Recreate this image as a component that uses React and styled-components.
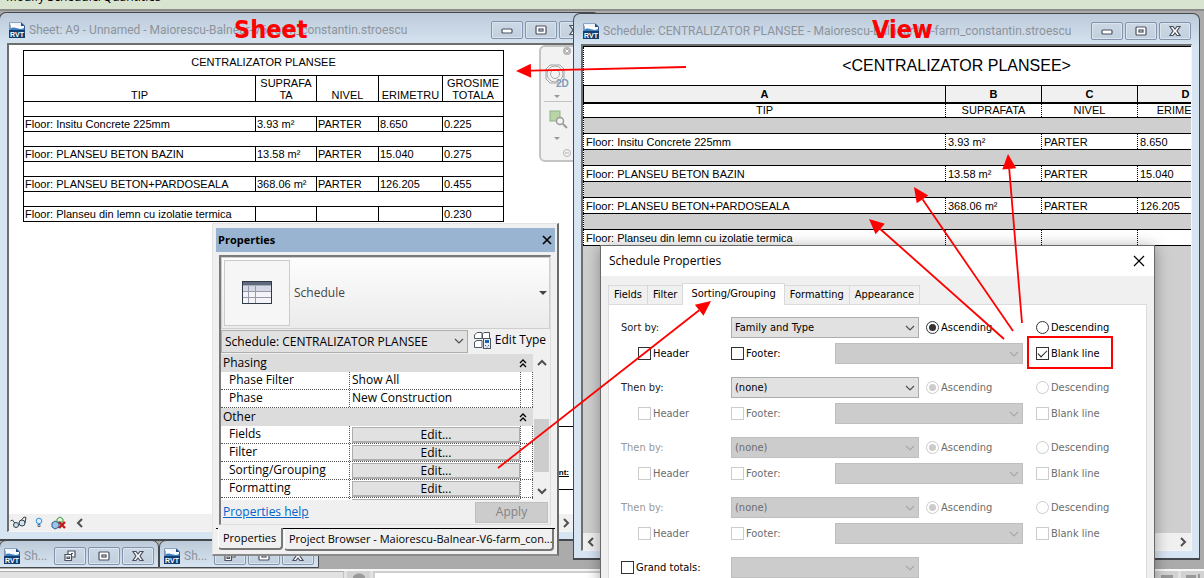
import React, { useState } from 'react';
import styled, { createGlobalStyle, css } from 'styled-components';

const ui = '"Open Sans", "Noto Sans", sans-serif';
const captionFont = 'Roboto, "Open Sans", sans-serif';
const dialogFont = '"DejaVu Sans Condensed", "DejaVu Sans", sans-serif';
const arial = '"Liberation Sans", Arial, sans-serif';

const sheetRows = [
  ['Floor: Insitu Concrete 225mm', '3.93 m²', 'PARTER', '8.650', '0.225'],
  ['Floor: PLANSEU BETON BAZIN', '13.58 m²', 'PARTER', '15.040', '0.275'],
  ['Floor: PLANSEU BETON+PARDOSEALA', '368.06 m²', 'PARTER', '126.205', '0.455'],
  ['Floor: Planseu din lemn cu izolatie termica', '', '', '', '0.230'],
];

const properties = [
  { category: 'Phasing' },
  { name: 'Phase Filter', value: 'Show All' },
  { name: 'Phase', value: 'New Construction' },
  { category: 'Other' },
  { name: 'Fields' },
  { name: 'Filter' },
  { name: 'Sorting/Grouping' },
  { name: 'Formatting' },
];

const tabs = ['Fields', 'Filter', 'Sorting/Grouping', 'Formatting', 'Appearance'];

const arrows = [
  [686, 67, 516, 71],
  [498, 468, 711, 301],
  [1004, 339, 869, 219],
  [1013, 331, 914, 187],
  [1022, 323, 1008, 154],
];

const RvtIcon = () => (
  <svg width="16" height="16" viewBox="0 0 16 16" aria-hidden="true">
    <path d="M1 0.5h11l3.5 3.5v11.5H1z" fill="#fff" stroke="#2a5a94" />
    <path d="M1 3c4-3 7 3 11 1V0.5H1z" fill="#eef4fa" />
    <path d="M1 7c5-4 8 2 14-1v4H1z" fill="#3f7fc0" />
    <path d="M12 0.5v3.5h3.5z" fill="#1d4a80" />
    <rect x="0" y="8" width="16" height="8" fill="#123d70" />
    <text x="8" y="15" textAnchor="middle" fontFamily="Liberation Sans" fontWeight="700" fontSize="7" fill="#fff">RVT</text>
  </svg>
);

const Glyph = ({ kind }) => (
  <svg width="14" height="12" viewBox="0 0 14 12" fill="#fff" stroke="#4a5060" strokeWidth="1.2" aria-hidden="true">
    {kind === 'min' && <rect x="2" y="5" width="10" height="4" rx="1" />}
    {kind === 'max' && <><rect x="2" y="2" width="10" height="8" rx="1" /><rect x="5" y="5" width="4" height="2" /></>}
    {kind === 'restore' && <><path d="M5 1h7v6H5z" /><path d="M2 4.500h6.500v6H2z" /><path d="M4 7h2.500v1.500H4zM8 3.500h2" /></>}
    {kind === 'close' && <path d="M2 1.500h3l2 2.500 2-2.500h3L9 6l3 4.500H9L7 8l-2 2.500H2L5 6z" />}
  </svg>
);

const Chevron = ({ dir = 'down', size = 10, color = '#505050', width = 1.2 }) => {
  const d = { down: 'M1 3l4 4 4-4', up: 'M1 7l4-4 4 4', left: 'M7 1L3 5l4 4', right: 'M3 1l4 4-4 4' }[dir];
  return (
    <svg width={size} height={size} viewBox="0 0 10 10" fill="none" stroke={color} strokeWidth={width} aria-hidden="true">
      <path d={d} />
    </svg>
  );
};

const WindowButtons = ({ first = 'min' }) => (
  <Buttons>
    <CaptionButton aria-label={first === 'min' ? 'Minimize' : 'Restore'}><Glyph kind={first} /></CaptionButton>
    <CaptionButton aria-label="Maximize"><Glyph kind="max" /></CaptionButton>
    <CaptionButton aria-label="Close"><Glyph kind="close" /></CaptionButton>
  </Buttons>
);

const Dropdown = ({ label, value, disabled, palette }) => (
  <SelectBox>
    <Select aria-label={label} disabled={disabled} $palette={palette}>
      <option>{value}</option>
    </Select>
    <Chevron color={disabled ? '#a8a8a8' : '#505050'} />
  </SelectBox>
);

const NavigationBar = () => (
  <NavBar>
    <svg width="36" height="113" viewBox="0 3 36 113" fill="none" stroke="#a8a8a8" aria-hidden="true">
      <circle cx="26" cy="7" r="4" fill="#b4b4b4" stroke="none" />
      <path d="M24.500 5.500l3 3m0-3l-3 3" stroke="#fff" />
      <path d="M9 21h10l4 4v10l-4 4H9l-4-4V25z" stroke="#8f8f8f" strokeWidth="0.800" />
      <circle cx="14" cy="30" r="8" />
      <circle cx="14" cy="30" r="4.500" />
      <text x="15" y="43" fontFamily="Liberation Sans" fontWeight="700" fontSize="10" fill="#7d9dbf" stroke="none">2D</text>
      <path d="M13 51h6l-3 3z" fill="#999" stroke="none" />
      <path d="M3 57.500h28" stroke="#c4c4c4" />
      <rect x="9" y="67" width="10" height="10" fill="#b8d4a8" stroke="#8fb183" />
      <circle cx="19" cy="77" r="3.500" fill="#f4f4f4" stroke="#999" strokeWidth="1.500" />
      <path d="M22 80l4 4" stroke="#999" strokeWidth="2" />
      <path d="M13 93h6l-3 3z" fill="#999" stroke="none" />
      <circle cx="26" cy="109" r="3.500" stroke="#b4b4b4" />
      <path d="M24 109h4" stroke="#b4b4b4" />
    </svg>
  </NavBar>
);

const SheetWindow = () => (
  <Window $left="-1px" $right="604px" $top="1px" $bottom="28px">
    <TitleBar>
      <RvtIcon />
      <Caption>Sheet: A9 - Unnamed - Maiorescu-Balnear-V6-farm_constantin.stroescu</Caption>
      <WindowButtons />
    </TitleBar>
    <Client>
      <SheetCanvas>
        <SheetTable>
          <colgroup>
            <col width="232" />
            <col width="61" />
            <col width="62" />
            <col width="64" />
            <col width="61" />
          </colgroup>
          <tbody>
            <SheetTitle><td colSpan="5">CENTRALIZATOR PLANSEE</td></SheetTitle>
            <SheetHead>
              <th>TIP</th>
              <th>SUPRAFA<br />TA</th>
              <th>NIVEL</th>
              <th>ERIMETRU</th>
              <th>GROSIME<br />TOTALA</th>
            </SheetHead>
            {sheetRows.map((row) => (
              <React.Fragment key={row[0]}>
                <tr><td colSpan="5" /></tr>
                <tr>{row.map((cell, i) => <td key={i}>{cell}</td>)}</tr>
              </React.Fragment>
            ))}
          </tbody>
        </SheetTable>
        <TitleBlock><span>Client:</span></TitleBlock>
        <NavigationBar />
      </SheetCanvas>
      <ViewControls>
        <svg width="17" height="14" viewBox="0 0 17 14" fill="none" stroke="#333f4c" aria-hidden="true">
          <path d="M0.500 5l2-1 3 4M9 7l5-6 2 0.500M15 7l1-5.500" />
          <circle cx="6" cy="9" r="2.500" fill="#cfe2ee" />
          <circle cx="12" cy="7" r="3" fill="#cfe2ee" />
        </svg>
        <svg width="8" height="14" viewBox="0 0 8 14" fill="none" aria-hidden="true">
          <circle cx="4" cy="5" r="2.800" fill="#d9efff" stroke="#2d8fe0" />
          <path d="M3 8.500h2v2H3z" fill="#fff" stroke="#506a80" />
        </svg>
        <svg width="16" height="14" viewBox="0 0 16 14" aria-hidden="true">
          <path d="M1 7l3-2 4 2v4l-4 2-3-2z" fill="#9cc4e4" stroke="#2b5f93" />
          <path d="M6 3l3-2 3 2v3H6z" fill="#e4f3dc" stroke="#3b9440" />
          <path d="M8 6l6 6m0-6l-6 6" stroke="#c2181c" strokeWidth="2.400" />
        </svg>
        <Chevron dir="left" width={2} />
        <Spacer />
        <Chevron dir="right" width={2} />
      </ViewControls>
    </Client>
  </Window>
);

const ScheduleWindow = () => (
  <Window $left="573px" $right="4px" $top="2px" $bottom="9px">
    <TitleBar>
      <RvtIcon />
      <Caption>Schedule: CENTRALIZATOR PLANSEE - Maiorescu-Balnear-V6-farm_constantin.stroescu</Caption>
      <WindowButtons />
    </TitleBar>
    <Client $grey>
      <ScheduleCanvas>
        <ScheduleTable>
          <colgroup>
            <col width="362" />
            <col width="96" />
            <col width="96" />
            <col width="96" />
            <col width="96" />
          </colgroup>
          <tbody>
            <ScheduleTitle><td colSpan="5">&lt;CENTRALIZATOR PLANSEE&gt;</td></ScheduleTitle>
            <LetterRow><th>A</th><th>B</th><th>C</th><th>D</th><th /></LetterRow>
            <FieldRow><td>TIP</td><td>SUPRAFATA</td><td>NIVEL</td><td>ERIMETRU</td><td /></FieldRow>
            {sheetRows.map((row) => (
              <React.Fragment key={row[0]}>
                <BlankRow><td colSpan="5" /></BlankRow>
                <tr>{row.map((cell, i) => <td key={i}>{i < 4 ? cell : ''}</td>)}</tr>
              </React.Fragment>
            ))}
          </tbody>
        </ScheduleTable>
      </ScheduleCanvas>
      <ScrollTrack>
        <Chevron dir="left" width={2} />
        <Chevron dir="right" width={2} />
      </ScrollTrack>
    </Client>
  </Window>
);

const PropertiesPalette = () => (
  <Palette>
    <PaletteTitle>
      Properties
      <IconButton aria-label="Close palette">
        <svg width="10" height="10" viewBox="0 0 10 10" stroke="#000" strokeWidth="1.600"><path d="M1 1l8 8m0-8L1 9" /></svg>
      </IconButton>
    </PaletteTitle>
    <PaletteBody>
      <TypeSelector>
        <Thumb>
          <svg width="30" height="24" viewBox="0 0 30 24" aria-hidden="true">
            <rect x="0.500" y="0.500" width="29" height="22" fill="#f4f4f8" stroke="#2f3947" />
            <rect x="1" y="1" width="28" height="3.500" fill="#5f6b7c" />
            <rect x="1" y="5" width="28" height="5" fill="#d5d9e6" />
            <path d="M1 10.500h28M1 16.500h28M6.500 5v17M13.500 5v17" stroke="#99a" />
            <rect x="0.500" y="0.500" width="29" height="22" fill="none" stroke="#2f3947" />
          </svg>
        </Thumb>
        <TypeName>Schedule</TypeName>
        <svg width="8" height="4" viewBox="0 0 8 4" aria-hidden="true"><path d="M0 0h8L4 4z" fill="#444" /></svg>
      </TypeSelector>
      <InstanceRow>
        <Dropdown palette label="Instance" value="Schedule: CENTRALIZATOR PLANSEE" />
        <EditType>
          <svg width="17" height="17" viewBox="0 0 17 17" fill="#fff" stroke="#4c5766" aria-hidden="true">
            <path d="M3 0.500h5v6H0.500V3zM10 0.500h5.500v6H8.500V2zM3 8.500h5v7H0.500V10z" />
            <rect x="9.500" y="6.500" width="7" height="10" fill="#e7edf4" />
            <rect x="11" y="8" width="4" height="3" fill="#1d63ad" stroke="none" />
            <path d="M11 13.500h1M14 13.500h1M12.500 15h1" />
          </svg>
          Edit Type
        </EditType>
      </InstanceRow>
      <GridArea>
        <PropertyList>
          {properties.map((p) => p.category ? (
            <Category key={p.category}>
              {p.category}
              <svg width="8" height="9" viewBox="0 0 8 9" fill="none" stroke="#000" strokeWidth="1.300" aria-hidden="true">
                <path d="M1 4l3-3 3 3M1 8l3-3 3 3" />
              </svg>
            </Category>
          ) : (
            <Property key={p.name}>
              <PropertyName>{p.name}</PropertyName>
              <PropertyValue>{p.value || <EditButton aria-label={`Edit ${p.name}`}>Edit...</EditButton>}</PropertyValue>
              <PropertyLink />
            </Property>
          ))}
          <Property>
            <PropertyName />
            <PropertyValue><EditButton aria-label="Edit" /></PropertyValue>
            <PropertyLink />
          </Property>
        </PropertyList>
        <VerticalScroll>
          <Chevron dir="up" width={2} />
          <ScrollThumb />
          <Chevron dir="down" width={2} />
        </VerticalScroll>
      </GridArea>
      <PaletteFooter>
        <a href="#help">Properties help</a>
        <ApplyButton disabled>Apply</ApplyButton>
      </PaletteFooter>
    </PaletteBody>
    <PaletteTabs>
      <PaletteTab $active>Properties</PaletteTab>
      <PaletteTab>Project Browser - Maiorescu-Balnear-V6-farm_con...</PaletteTab>
    </PaletteTabs>
  </Palette>
);

const SortGroup = ({ id, title, value, dim, disabled, dimTitle }) => {
  const [order, setOrder] = useState('asc');
  const [blank, setBlank] = useState(!dim);

  return (
    <Group>
      <RowLabel $dim={dimTitle}>{title}</RowLabel>
      <Wide><Dropdown label={title} value={value} disabled={disabled} /></Wide>
      <Choice $dim={dim} $indent="7px">
        <Radio name={id} disabled={dim} checked={order === 'asc'} onChange={() => setOrder('asc')} />Ascending
      </Choice>
      <Choice $dim={dim}>
        <Radio name={id} disabled={dim} checked={order === 'desc'} onChange={() => setOrder('desc')} />Descending
      </Choice>
      <Choice $dim={dim} $indent="17px"><Check disabled={dim} />Header</Choice>
      <Choice $dim={dim}><Check disabled={dim} />Footer:</Choice>
      <Wide><Dropdown label={`${title} footer`} value="" disabled /></Wide>
      <Choice $dim={dim}>
        <Check disabled={dim} checked={blank} onChange={() => setBlank(!blank)} />Blank line
      </Choice>
    </Group>
  );
};

const ScheduleDialog = () => {
  const [active, setActive] = useState('Sorting/Grouping');

  return (
    <Dialog role="dialog" aria-label="Schedule Properties">
      <DialogTitle>
        Schedule Properties
        <IconButton aria-label="Close dialog">
          <svg width="12" height="12" viewBox="0 0 12 12" stroke="#000" strokeWidth="1.200"><path d="M1 1l10 10m0-10L1 11" /></svg>
        </IconButton>
      </DialogTitle>
      <DialogTabs>
        {tabs.map((tab) => (
          <DialogTab key={tab} $active={tab === active} onClick={() => setActive(tab)}>{tab}</DialogTab>
        ))}
      </DialogTabs>
      <DialogPanel>
        <SortGroup id="sort1" title="Sort by:" value="Family and Type" />
        <SortGroup id="sort2" title="Then by:" value="(none)" dim />
        <SortGroup id="sort3" title="Then by:" value="(none)" dim disabled dimTitle />
        <SortGroup id="sort4" title="Then by:" value="(none)" dim disabled dimTitle />
        <Group>
          <Choice><Check />Grand totals:</Choice>
          <Wide><Dropdown label="Grand totals" value="" disabled /></Wide>
        </Group>
      </DialogPanel>
    </Dialog>
  );
};

const Arrow = ({ points: [x1, y1, x2, y2] }) => {
  const len = Math.hypot(x2 - x1, y2 - y1);
  const ux = (x2 - x1) / len;
  const uy = (y2 - y1) / len;
  const bx = x2 - ux * 15;
  const by = y2 - uy * 15;
  return (
    <g>
      <line x1={x1} y1={y1} x2={bx} y2={by} stroke="#ff0000" strokeWidth="1.800" />
      <polygon fill="#ff0000" points={`${x2},${y2} ${bx - uy * 7},${by + ux * 7} ${bx + uy * 7},${by - ux * 7}`} />
    </g>
  );
};

const App = () => (
  <Desktop>
    <GlobalStyle />
    <OptionsBar>Modify Schedule/Quantities</OptionsBar>
    <Workspace>
      <SheetWindow />
      <ScheduleWindow />
      <Minimized>
        {[0, 1].map((i) => (
          <MinimizedWindow key={i}>
            <RvtIcon />
            <Caption>Sh...</Caption>
            <WindowButtons first="restore" />
          </MinimizedWindow>
        ))}
      </Minimized>
    </Workspace>
    <StatusBar>
      <StatusText />
      <StatusIcon><svg width="12" height="5" viewBox="0 0 12 5"><path d="M0 5c0-6 12-6 12 0z" fill="#999" /></svg></StatusIcon>
      <StatusField />
      <StatusIcon />
      <Spacer />
      <StatusIcon><svg width="12" height="4" viewBox="0 0 12 4"><path d="M0 1h12v3H0z" fill="#999" /></svg></StatusIcon>
      <StatusIcon><svg width="14" height="4" viewBox="0 0 14 4"><path d="M0 1h10v3H0zM12 0h2v4h-2z" fill="#999" /></svg></StatusIcon>
    </StatusBar>
    <PropertiesPalette />
    <ScheduleDialog />
    <Markup aria-hidden="true">
      {arrows.map((points) => <Arrow key={points.join()} points={points} />)}
      <rect x="1028" y="337" width="84" height="31" fill="none" stroke="#ff0000" strokeWidth="2" />
    </Markup>
    <Note $left="234px">Sheet</Note>
    <Note $left="872px">View</Note>
  </Desktop>
);

const GlobalStyle = createGlobalStyle`
  * { box-sizing: border-box; }
  body { margin: 0; overflow: hidden; }
  button, select, input { font: inherit; color: inherit; margin: 0; padding: 0; }
  svg { display: block; flex: none; }
`;

const Desktop = styled.div`
  position: relative;
  display: flex;
  flex-direction: column;
  height: 100vh;
  overflow: hidden;
  background: #ababab;
  font: 12px/16px ${ui};
  color: #000;
`;

const OptionsBar = styled.div`
  display: flex;
  align-items: flex-end;
  height: 11px;
  padding: 0 6px 4px;
  overflow: hidden;
  background: #d8e4d0;
  border-bottom: 2px solid #8c8c8c;
`;

const Workspace = styled.main`
  position: relative;
  flex: 1;
  overflow: hidden;
`;

const Window = styled.section`
  position: absolute;
  left: ${(p) => p.$left};
  right: ${(p) => p.$right};
  top: ${(p) => p.$top};
  bottom: ${(p) => p.$bottom};
  display: flex;
  flex-direction: column;
  padding: 0 7px 7px;
  border: 1px solid #45484c;
  border-bottom-width: 2px;
  border-radius: 7px 7px 0 0;
  background: linear-gradient(#bccad9, #d7e4f2 32px);
`;

const TitleBar = styled.header`
  display: flex;
  align-items: center;
  gap: 4px;
  height: 30px;
  padding: 4px 1px 0 2px;
`;

const Caption = styled.div`
  flex: 1;
  min-width: 0;
  overflow: hidden;
  white-space: nowrap;
  font-family: ${captionFont};
  color: #8d939b;
`;

const Buttons = styled.div`
  display: flex;
  gap: 2px;
`;

const CaptionButton = styled.button`
  display: grid;
  place-items: center;
  width: 32px;
  height: 18px;
  border: 1px solid #8493ad;
  border-radius: 2px;
  background: linear-gradient(#ccd8e4, #c2cfdd);
  box-shadow: inset 0 0 0 1px #dbe5ef;
`;

const Client = styled.div`
  flex: 1;
  display: flex;
  flex-direction: column;
  min-height: 0;
  border: 2px solid #6e6e6e;
  border-width: 2px 1px 1px 2px;
  border-right-color: #f4f4f4;
  border-bottom-color: #f4f4f4;
  background: ${(p) => (p.$grey ? '#cfcfcf' : '#fff')};
`;

const SheetCanvas = styled.div`
  position: relative;
  flex: 1;
  min-height: 0;
  padding: 5px 0 0 14px;
  overflow: hidden;
`;

const tableText = css`
  border-collapse: collapse;
  table-layout: fixed;
  font: 11px/12px ${arial};
`;

const SheetTable = styled.table`
  ${tableText}
  width: 481px;

  td, th {
    height: 15px;
    padding: 0 1px;
    border: 1px solid #000;
    font-weight: 400;
    white-space: nowrap;
  }
`;

const SheetTitle = styled.tr`
  && td {
    height: 25px;
    padding-bottom: 2px;
    text-align: center;
  }
`;

const SheetHead = styled.tr`
  && th {
    height: 26px;
    vertical-align: bottom;
    text-align: center;
  }
`;

const TitleBlock = styled.div`
  position: absolute;
  top: 381px;
  left: 400px;
  right: 0;
  height: 64px;
  padding: 40px 22px 0 0;
  border: 1px solid #000;
  border-width: 1px 0;
  text-align: right;
  font: 700 8px/12px ${arial};
  text-decoration: underline;
`;

const NavBar = styled.div`
  position: absolute;
  top: 0;
  left: 530px;
  width: 40px;
  border: 2px solid #c4c4c4;
  border-radius: 6px;
  background: #f2f2f2;
  overflow: hidden;
`;

const ViewControls = styled.div`
  display: flex;
  align-items: center;
  gap: 8px;
  height: 17px;
  padding: 0 20px 0 1px;
  background: #f0f0f0;
`;

const Spacer = styled.div`
  flex: 1;
`;

const ScheduleCanvas = styled.div`
  flex: 1;
  min-height: 0;
  overflow: hidden;
`;

const ScheduleTable = styled.table`
  ${tableText}
  width: 746px;
  background: #fff;

  td, th {
    height: 16px;
    padding: 0 2px;
    border: 1px solid #000;
    border-left: 1px dotted #000;
    border-right: 1px dotted #000;
    white-space: nowrap;
    overflow: hidden;
  }
`;

const ScheduleTitle = styled.tr`
  && td {
    height: 39px;
    font-size: 16px;
    text-align: center;
  }
`;

const LetterRow = styled.tr`
  background: #f0f0f0;

  && th {
    height: 17px;
    border: 1px solid #000;
    border-bottom-width: 2px;
  }
`;

const FieldRow = styled.tr`
  text-align: center;

  && td { height: 15px; }
`;

const BlankRow = styled.tr`
  background: #cfcfcf;
`;

const ScrollTrack = styled.div`
  display: flex;
  align-items: center;
  justify-content: space-between;
  height: 17px;
  padding: 0 3px;
  background: #f0f0f0;
`;

const Minimized = styled.div`
  position: absolute;
  left: -1px;
  bottom: 1px;
  display: flex;
`;

const MinimizedWindow = styled.section`
  display: flex;
  align-items: center;
  gap: 4px;
  width: 160px;
  height: 28px;
  padding: 3px 4px 0;
  border: 1px solid #45484c;
  border-radius: 7px 7px 0 0;
  background: linear-gradient(#bccad9, #d7e4f2);
`;

const StatusBar = styled.footer`
  display: flex;
  gap: 3px;
  height: 9px;
  border-top: 2px solid #f8f8f8;
  background: #e2e2e2;
`;

const StatusText = styled.div`
  width: 344px;
  border-top: 1px solid #b0b0b0;
  border-right: 1px solid #c0c0c0;
`;

const StatusIcon = styled.div`
  display: flex;
  justify-content: center;
  align-items: flex-end;
  width: 23px;
  background: #d2d2d2;
`;

const StatusField = styled.div`
  width: 346px;
  background: #fff;
  border: 2px solid #cfcfcf;
  border-bottom: 0;
`;

const Palette = styled.section`
  position: absolute;
  left: 212px;
  top: 223px;
  width: 347px;
  padding: 4px 2px 3px 3px;
  border: 1px solid #e3e3e3;
  border-right: 2px solid #6b6b6b;
  border-bottom: 2px solid #8a8a8a;
  background: #f0f0f0;
`;

const PaletteTitle = styled.header`
  display: flex;
  align-items: center;
  justify-content: space-between;
  height: 24px;
  padding: 0 2px;
  background: #99b4d1;
  font-size: 11px;
  font-weight: 700;
`;

const IconButton = styled.button`
  display: grid;
  place-items: center;
  width: 12px;
  height: 16px;
  border: 0;
  background: none;
`;

const PaletteBody = styled.div`
  margin: 3px 4px 0 3px;
  border: 2px solid #7a7a7a;
  border-width: 2px 1px 1px 2px;
  border-right-color: #ddd;
  border-bottom-color: #ddd;
`;

const TypeSelector = styled.div`
  display: flex;
  align-items: center;
  height: 72px;
  padding: 0 2px;
  border: 1px solid #cfcfcf;
  background: linear-gradient(#fdfdfd, #ebebeb);
`;

const Thumb = styled.div`
  display: grid;
  place-items: center;
  width: 66px;
  height: 66px;
  border: 1px solid #cbcbcb;
  background: #f6f6f6;
`;

const TypeName = styled.div`
  flex: 1;
  padding-left: 4px;
  color: #444;
`;

const InstanceRow = styled.div`
  display: grid;
  grid-template-columns: 1fr auto;
  gap: 6px;
  height: 25px;
  padding: 1px 4px 0 0;
`;

const SelectBox = styled.div`
  position: relative;
  min-width: 0;

  svg {
    position: absolute;
    right: 4px;
    top: 6px;
    pointer-events: none;
  }
`;

const Select = styled.select`
  appearance: none;
  display: block;
  width: 100%;
  height: ${(p) => (p.$palette ? '23px' : '21px')};
  padding: 0 16px 0 3px;
  border: 1px solid #adadad;
  border-radius: 0;
  background: #e1e1e1;

  &:disabled {
    border-color: #bfbfbf;
    background: #cccccc;
    color: #6d6d6d;
    opacity: 1;
  }
`;

const EditType = styled.button`
  display: flex;
  align-items: center;
  gap: 4px;
  height: 20px;
  border: 0;
  background: none;
  white-space: nowrap;
`;

const GridArea = styled.div`
  display: flex;
  height: 146px;
  overflow: hidden;
`;

const PropertyList = styled.div`
  flex: 1;
  background: #fff;
`;

const Category = styled.div`
  display: flex;
  align-items: center;
  justify-content: space-between;
  height: 18px;
  padding: 0 6px 0 2px;
  background: #dcdcdc;
`;

const Property = styled.div`
  display: grid;
  grid-template-columns: 129px 1fr 13px;
  height: 18px;
  border-bottom: 1px dotted #555;
`;

const PropertyName = styled.div`
  padding-left: 8px;
  border-right: 1px dotted #555;
`;

const PropertyValue = styled.div`
  padding-left: 2px;
`;

const PropertyLink = styled.div`
  border: 1px dotted #555;
  border-width: 0 1px;
`;

const EditButton = styled.button`
  display: block;
  width: 100%;
  height: 16px;
  margin-top: 1px;
  border: 1px solid #adadad;
  border-width: 1px 1px 2px;
  background: #e1e1e1;
  line-height: 13px;
`;

const VerticalScroll = styled.div`
  display: flex;
  flex-direction: column;
  align-items: center;
  justify-content: space-between;
  width: 17px;
  padding: 4px 0;
`;

const ScrollThumb = styled.div`
  width: 15px;
  height: 53px;
  margin-top: 36px;
  background: #cdcdcd;
`;

const PaletteFooter = styled.div`
  display: flex;
  align-items: center;
  justify-content: space-between;
  height: 24px;
  padding: 0 2px;

  a { color: #0066cc; }
`;

const ApplyButton = styled.button`
  width: 73px;
  height: 21px;
  border: 1px solid #bfbfbf;
  background: #cccccc;
  color: #838383;
`;

const PaletteTabs = styled.div`
  display: flex;
  gap: 1px;
  margin-top: 3px;
  padding: 0 1px 0 2px;
  border-top: 1px solid #000;
`;

const PaletteTab = styled.button`
  flex: ${(p) => (p.$active ? '0 0 65px' : '1 1 0')};
  min-width: 0;
  height: 22px;
  margin-top: ${(p) => (p.$active ? '-1px' : '0')};
  padding: 0 0 0 4px;
  overflow: hidden;
  border: 1px solid #777;
  border-width: 0 2px 2px 1px;
  border-left-color: #fff;
  border-radius: 0 0 4px 4px;
  background: #f0f0f0;
  white-space: nowrap;
  text-align: left;
  font-size: 11px;
`;

const Dialog = styled.section`
  position: absolute;
  isolation: isolate;
  left: 600px;
  top: 245px;
  bottom: -10px;
  width: 555px;
  display: flex;
  flex-direction: column;
  padding: 0 7px;
  border: 1px solid #6a6a6a;
  background: #f0f0f0;
  box-shadow: 0 2px 14px rgba(0, 0, 0, 0.35);
`;

const DialogTitle = styled.header`
  flex: none;
  display: flex;
  align-items: center;
  justify-content: space-between;
  height: 30px;
  margin: 0 -7px;
  padding: 0 9px 0 8px;
  background: #fff;
`;

const DialogTabs = styled.div`
  flex: none;
  display: flex;
  align-items: flex-end;
  height: 28px;
  padding-left: 1px;
  font: 11px/14px ${dialogFont};
`;

const DialogTab = styled.button`
  height: 19px;
  margin-left: -1px;
  padding: 0 5px;
  border: 1px solid #d9d9d9;
  border-bottom: 0;
  background: #f0f0f0;

  ${(p) => p.$active && css`
    z-index: 1;
    height: 22px;
    margin-bottom: -1px;
    padding: 0 8px 2px;
    background: #fff;
  `}
`;

const DialogPanel = styled.div`
  flex: 1;
  padding: 12px 12px 0;
  border: 1px solid #dcdcdc;
  background: #fff;
  font: 11px/14px ${dialogFont};
`;

const Group = styled.div`
  display: grid;
  grid-template-columns: 110px 104px 84px 117px 1fr;
  grid-auto-rows: 21px;
  row-gap: 5px;
  margin-bottom: 13px;
`;

const Wide = styled.div`
  grid-column: span 2;
  width: 188px;
`;

const RowLabel = styled.div`
  line-height: 21px;
  color: ${(p) => (p.$dim ? '#999' : '#222')};
`;

const Choice = styled.label`
  display: flex;
  align-items: center;
  gap: 2px;
  padding-left: ${(p) => p.$indent || 0};
  color: ${(p) => (p.$dim ? '#6d6d6d' : '#000')};
  white-space: nowrap;
`;

const Check = styled.input.attrs({ type: 'checkbox' })`
  appearance: none;
  flex: none;
  display: grid;
  place-items: center;
  width: 13px;
  height: 13px;
  border: 1px solid #333;
  background: #fff;

  &:disabled { border-color: #ccc; }

  &:checked::after {
    content: '';
    width: 8px;
    height: 4px;
    margin-top: -2px;
    border: 1px solid #222;
    border-width: 0 0 1px 1px;
    transform: rotate(-45deg);
  }
`;

const Radio = styled(Check).attrs({ type: 'radio' })`
  border-radius: 50%;

  &:checked::after {
    width: 7px;
    height: 7px;
    margin: 0;
    border: 0;
    border-radius: 50%;
    background: #333;
    transform: none;
  }

  &:disabled::after { background: #ccc; }
`;

const Markup = styled.svg`
  position: absolute;
  inset: 0;
  width: 100%;
  height: 100%;
  pointer-events: none;
`;

const Note = styled.div`
  position: absolute;
  left: ${(p) => p.$left};
  top: 14px;
  font: 700 25px/32px ${dialogFont};
  color: #ff0000;
`;

export default App;
